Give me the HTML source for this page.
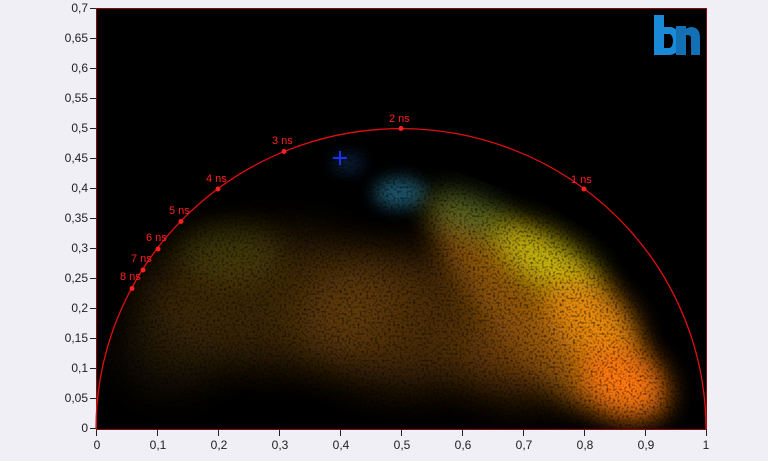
<!DOCTYPE html>
<html><head><style>
html,body{margin:0;padding:0;background:#efeff5;width:768px;height:461px;overflow:hidden}
svg{display:block}
text{font-family:"Liberation Sans",sans-serif}
</style></head><body>
<svg width="768" height="461" viewBox="0 0 768 461" xmlns="http://www.w3.org/2000/svg">
<defs>
<filter id="b8" x="-50%" y="-50%" width="200%" height="200%"><feGaussianBlur stdDeviation="8"/></filter>
<filter id="b14" x="-50%" y="-50%" width="200%" height="200%"><feGaussianBlur stdDeviation="14"/></filter>
<filter id="b22" x="-50%" y="-50%" width="200%" height="200%"><feGaussianBlur stdDeviation="22"/></filter>
<filter id="noise" x="0" y="0" width="100%" height="100%">
<feTurbulence type="fractalNoise" baseFrequency="0.45" numOctaves="1" seed="3"/>
<feColorMatrix type="matrix" values="0 0 0 0 0  0 0 0 0 0  0 0 0 0 0  0 0 0 -3 1.6"/>
</filter>
<clipPath id="pc"><path d="M96 429 A305 300.5 0 0 1 706 429 Z"/></clipPath>
</defs>
<rect x="96" y="8" width="611" height="422" fill="#000"/>
<g clip-path="url(#pc)">
<ellipse cx="270" cy="300" rx="130" ry="65" fill="#6a4408" opacity="0.55" filter="url(#b22)"/>
<ellipse cx="230" cy="255" rx="50" ry="28" fill="#5a5a10" opacity="0.45" filter="url(#b14)"/>
<ellipse cx="410" cy="320" rx="110" ry="65" fill="#7a4a0c" opacity="0.6" filter="url(#b22)"/>
<ellipse cx="170" cy="350" rx="50" ry="40" fill="#4a3408" opacity="0.4" filter="url(#b22)"/>
<ellipse cx="348" cy="163" rx="16" ry="9" fill="#1a4a8a" opacity="0.5" filter="url(#b8)"/>
<ellipse cx="400" cy="193" rx="26" ry="15" fill="#2a7a9a" opacity="0.7" filter="url(#b8)"/>
<path d="M430 205 Q520 220 600 300 Q660 370 665 410 L570 405 Q490 330 440 250 Z" fill="#b06a10" opacity="0.75" filter="url(#b14)"/>
<ellipse cx="470" cy="215" rx="45" ry="18" fill="#6a8a30" opacity="0.7" filter="url(#b14)" transform="rotate(20 470 215)"/>
<ellipse cx="548" cy="262" rx="62" ry="24" fill="#d0c010" opacity="0.95" filter="url(#b14)" transform="rotate(32 548 262)"/>
<ellipse cx="590" cy="325" rx="52" ry="36" fill="#f09010" opacity="0.95" filter="url(#b14)" transform="rotate(40 590 325)"/>
<ellipse cx="622" cy="382" rx="45" ry="32" fill="#ff780a" filter="url(#b14)" transform="rotate(30 622 382)"/>
<ellipse cx="520" cy="355" rx="55" ry="40" fill="#a05a10" opacity="0.6" filter="url(#b22)"/>
<rect x="96" y="8" width="611" height="422" filter="url(#noise)" opacity="0.6"/>
</g>
<path d="M340 151v14M333 158h14" stroke="#1530ff" stroke-width="2"/>
<rect x="96.5" y="8.5" width="610" height="421" fill="none" stroke="#8a0a0a" stroke-width="1"/>
<path d="M96 429 A305 300.5 0 0 1 706 429" fill="none" stroke="#e01010" stroke-width="1.3"/>
<g fill="#ff2020">
<circle cx="584" cy="189" r="2.5"/><circle cx="401" cy="128.5" r="2.5"/><circle cx="284" cy="151.5" r="2.5"/>
<circle cx="218" cy="189" r="2.5"/><circle cx="181" cy="221.5" r="2.5"/><circle cx="158" cy="249" r="2.5"/>
<circle cx="143" cy="270" r="2.5"/><circle cx="132" cy="288.5" r="2.5"/>
</g>
<g fill="#ff2020" font-size="11">
<text x="571" y="183">1 ns</text><text x="389" y="122">2 ns</text><text x="272" y="144">3 ns</text>
<text x="206" y="182">4 ns</text><text x="169" y="214">5 ns</text><text x="146" y="241">6 ns</text>
<text x="131" y="262">7 ns</text><text x="120" y="280">8 ns</text>
</g>
<rect x="654" y="15" width="10" height="40" fill="#1a8ad6"/>
<path d="M662 27 h8 a10 13 0 0 1 0 28 h-8 z M664 34 v14 h5 a4 7 0 0 0 0 -14 z" fill="#1a8ad6" fill-rule="evenodd"/>
<rect x="676" y="26" width="10" height="29" fill="#1470b4"/>
<path d="M684 30 q8 -6 14 0 q2 3 2 8 v17 h-9 v-17 q0 -3 -4 -3 h-3z" fill="#1470b4"/>
<g stroke="#222" stroke-width="1">
<path d="M90 8.5h6M90 38.5h6M90 68.5h6M90 98.5h6M90 128.5h6M90 158.5h6M90 188.5h6M90 218.5h6M90 248.5h6M90 278.5h6M90 308.5h6M90 338.5h6M90 368.5h6M90 398.5h6M90 428.5h6"/>
<path d="M96.5 430v6M157.5 430v6M218.5 430v6M279.5 430v6M340.5 430v6M401.5 430v6M462.5 430v6M523.5 430v6M584.5 430v6M645.5 430v6M706.5 430v6"/>
</g>
<g fill="#222" font-size="12" text-anchor="end">
<text x="88" y="12">0,7</text><text x="88" y="42">0,65</text><text x="88" y="72">0,6</text><text x="88" y="102">0,55</text>
<text x="88" y="132">0,5</text><text x="88" y="162">0,45</text><text x="88" y="192">0,4</text><text x="88" y="222">0,35</text>
<text x="88" y="252">0,3</text><text x="88" y="282">0,25</text><text x="88" y="312">0,2</text><text x="88" y="342">0,15</text>
<text x="88" y="372">0,1</text><text x="88" y="402">0,05</text><text x="88" y="432">0</text>
</g>
<g fill="#222" font-size="12" text-anchor="middle">
<text x="97" y="449">0</text><text x="158" y="449">0,1</text><text x="219" y="449">0,2</text><text x="280" y="449">0,3</text>
<text x="341" y="449">0,4</text><text x="402" y="449">0,5</text><text x="463" y="449">0,6</text><text x="524" y="449">0,7</text>
<text x="585" y="449">0,8</text><text x="646" y="449">0,9</text><text x="706" y="449">1</text>
</g>
</svg>
</body></html>
